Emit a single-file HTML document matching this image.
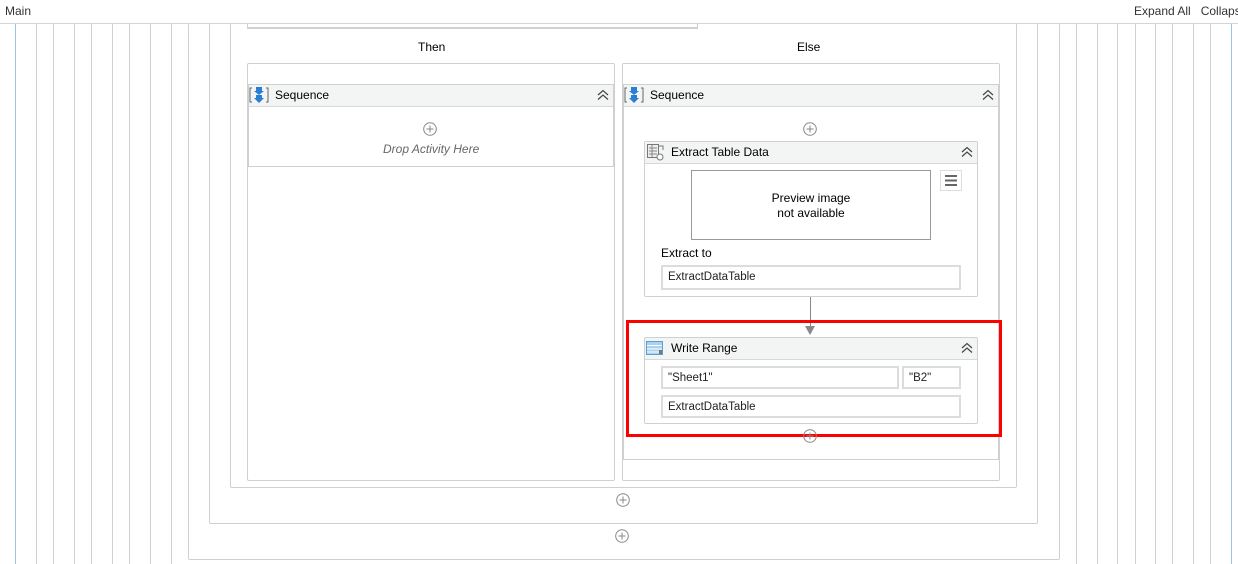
<!DOCTYPE html>
<html><head><meta charset="utf-8"><style>
*{box-sizing:border-box;margin:0;padding:0}
body{width:1238px;height:564px;background:#fff;position:relative;overflow:hidden;font-family:"Liberation Sans",sans-serif;font-size:12px;color:#000}
.a{position:absolute}
.vl{position:absolute;top:23px;bottom:0;width:1px;background:#d0d0d0}
.box{position:absolute;border:1px solid #d0d0d0;border-radius:2px;background:#fff}
.hdr{position:absolute;left:0;right:0;top:0;height:22px;background:#f3f5f4;border-bottom:1px solid #d8d8d8}
.hdr span{position:absolute;left:26px;top:3px;font-size:12px}
.inp{position:absolute;border:2px solid #dcdcdc;background:#fff;font-size:11.5px;padding:4px 0 0 5px;color:#222}
.plus{position:absolute;width:14px;height:14px}
</style></head><body>

<div class="vl" style="left:15px;background:#9fc3e0"></div>
<div class="vl" style="left:36px"></div><div class="vl" style="left:53px"></div><div class="vl" style="left:74px"></div>
<div class="vl" style="left:91px"></div><div class="vl" style="left:112px"></div><div class="vl" style="left:129px"></div>
<div class="vl" style="left:150px"></div><div class="vl" style="left:171px"></div>
<div class="vl" style="left:1076px"></div><div class="vl" style="left:1097px"></div><div class="vl" style="left:1117px"></div>
<div class="vl" style="left:1135px"></div><div class="vl" style="left:1155px"></div><div class="vl" style="left:1172px"></div>
<div class="vl" style="left:1193px"></div><div class="vl" style="left:1210px"></div>
<div class="vl" style="left:1231px;background:#9fc3e0"></div>

<div class="box" style="left:188px;top:23px;width:872px;height:537px;border-top:none"></div>
<div class="box" style="left:209px;top:23px;width:829px;height:501px;border-top:none"></div>
<div class="box" style="left:230px;top:23px;width:787px;height:465px;border-top:none"></div>
<div class="box" style="left:247px;top:23px;width:451px;height:6px;border-top:none;border-bottom:2px solid #d0d0d0;border-radius:0"></div>

<div class="a" style="left:0;top:0;width:1238px;height:24px;border-bottom:1px solid #d4d4d4;background:#fff"></div>
<div class="a" style="left:5px;top:4px;font-size:12px;color:#333">Main</div>
<div class="a" style="left:1134px;top:4px;font-size:12px;color:#333;white-space:nowrap">Expand All&nbsp;&nbsp; Collaps</div>

<div class="a" style="left:418px;top:40px">Then</div>
<div class="a" style="left:797px;top:40px">Else</div>

<div class="box" style="left:247px;top:63px;width:368px;height:418px"></div>
<div class="box" style="left:248px;top:84px;width:366px;height:83px;border-radius:0">
 <div class="hdr"><span>Sequence</span></div>
</div>
<div class="box" style="left:622px;top:63px;width:378px;height:418px"></div>
<div class="box" style="left:623px;top:84px;width:376px;height:376px;border-radius:0">
 <div class="hdr"><span>Sequence</span></div>
</div>

<div class="a" style="left:383px;top:142px;font-style:italic;color:#666">Drop Activity Here</div>

<div class="box" style="left:644px;top:141px;width:334px;height:156px">
 <div class="hdr"><span>Extract Table Data</span></div>
</div>
<div class="a" style="left:691px;top:170px;width:240px;height:70px;border:1px solid #999;text-align:center;padding-top:20px;line-height:15px">Preview image<br>not available</div>
<div class="a" style="left:940px;top:170px;width:22px;height:21px;border:1px solid #ddd">
 <svg width="20" height="19"><rect x="4" y="4" width="12" height="2" fill="#666"/><rect x="4" y="8.5" width="12" height="2" fill="#666"/><rect x="4" y="13" width="12" height="2" fill="#666"/></svg>
</div>
<div class="a" style="left:661px;top:246px">Extract to</div>
<div class="inp" style="left:661px;top:265px;width:300px;height:25px">ExtractDataTable</div>

<div class="a" style="left:810px;top:297px;width:1px;height:30px;background:#888"></div>
<svg class="a" style="left:805px;top:326px" width="11" height="10"><path d="M0 0H10L5 9Z" fill="#888"/></svg>

<div class="box" style="left:644px;top:337px;width:334px;height:87px">
 <div class="hdr"><span>Write Range</span></div>
</div>
<div class="inp" style="left:661px;top:366px;width:238px;height:23px">"Sheet1"</div>
<div class="inp" style="left:902px;top:366px;width:59px;height:23px">"B2"</div>
<div class="inp" style="left:661px;top:395px;width:300px;height:23px">ExtractDataTable</div>

<div class="a" style="left:626px;top:320px;width:376px;height:117px;border:3px solid #f00"></div>

<svg class="plus" style="left:423px;top:122px" viewBox="0 0 14 14"><circle cx="7" cy="7" r="6.3" fill="none" stroke="#888"/><path d="M7 3.5V10.5M3.5 7H10.5" stroke="#888"/></svg>
<svg class="plus" style="left:803px;top:122px" viewBox="0 0 14 14"><circle cx="7" cy="7" r="6.3" fill="none" stroke="#888"/><path d="M7 3.5V10.5M3.5 7H10.5" stroke="#888"/></svg>
<svg class="plus" style="left:803px;top:429px" viewBox="0 0 14 14"><circle cx="7" cy="7" r="6.3" fill="none" stroke="#888"/><path d="M7 3.5V10.5M3.5 7H10.5" stroke="#888"/></svg>
<svg class="plus" style="left:616px;top:493px" viewBox="0 0 14 14"><circle cx="7" cy="7" r="6.3" fill="none" stroke="#888"/><path d="M7 3.5V10.5M3.5 7H10.5" stroke="#888"/></svg>
<svg class="plus" style="left:615px;top:529px" viewBox="0 0 14 14"><circle cx="7" cy="7" r="6.3" fill="none" stroke="#888"/><path d="M7 3.5V10.5M3.5 7H10.5" stroke="#888"/></svg>

<svg class="a" style="left:249px;top:86px" width="20" height="18"><path d="M3 2H1V16H3M17 2H19V16H17" fill="none" stroke="#666"/><path d="M7 1H13V5H15L10 9L5 5H7Z" fill="#2a7fd4"/><path d="M7 9H13V12H15L10 17L5 12H7Z" fill="#2a7fd4"/></svg>
<svg class="a" style="left:624px;top:86px" width="20" height="18"><path d="M3 2H1V16H3M17 2H19V16H17" fill="none" stroke="#666"/><path d="M7 1H13V5H15L10 9L5 5H7Z" fill="#2a7fd4"/><path d="M7 9H13V12H15L10 17L5 12H7Z" fill="#2a7fd4"/></svg>
<svg class="a" style="left:646px;top:143px" width="20" height="18"><rect x="1.5" y="1.5" width="11" height="13" fill="#eee" stroke="#777"/><path d="M3 5H11M3 8H11M3 11H11M6 2V14" stroke="#888"/><circle cx="14" cy="14" r="3" fill="#fff" stroke="#777"/><path d="M13 3H17V7" fill="none" stroke="#777"/></svg>
<svg class="a" style="left:646px;top:340px" width="18" height="16"><rect x="0.5" y="1.5" width="16" height="13" fill="#a9d2f0" stroke="#5aa0d8"/><path d="M1 5.5H16M1 9H16M1 12H16" stroke="#fff"/><rect x="13" y="10" width="3" height="4" fill="#777"/></svg>

<svg class="a" style="left:597px;top:89px" width="12" height="12"><path d="M1 6L6 1.5L11 6M1 10.5L6 6L11 10.5" fill="none" stroke="#444" stroke-width="1.2"/></svg>
<svg class="a" style="left:982px;top:89px" width="12" height="12"><path d="M1 6L6 1.5L11 6M1 10.5L6 6L11 10.5" fill="none" stroke="#444" stroke-width="1.2"/></svg>
<svg class="a" style="left:961px;top:146px" width="12" height="12"><path d="M1 6L6 1.5L11 6M1 10.5L6 6L11 10.5" fill="none" stroke="#444" stroke-width="1.2"/></svg>
<svg class="a" style="left:961px;top:342px" width="12" height="12"><path d="M1 6L6 1.5L11 6M1 10.5L6 6L11 10.5" fill="none" stroke="#444" stroke-width="1.2"/></svg>
</body></html>
